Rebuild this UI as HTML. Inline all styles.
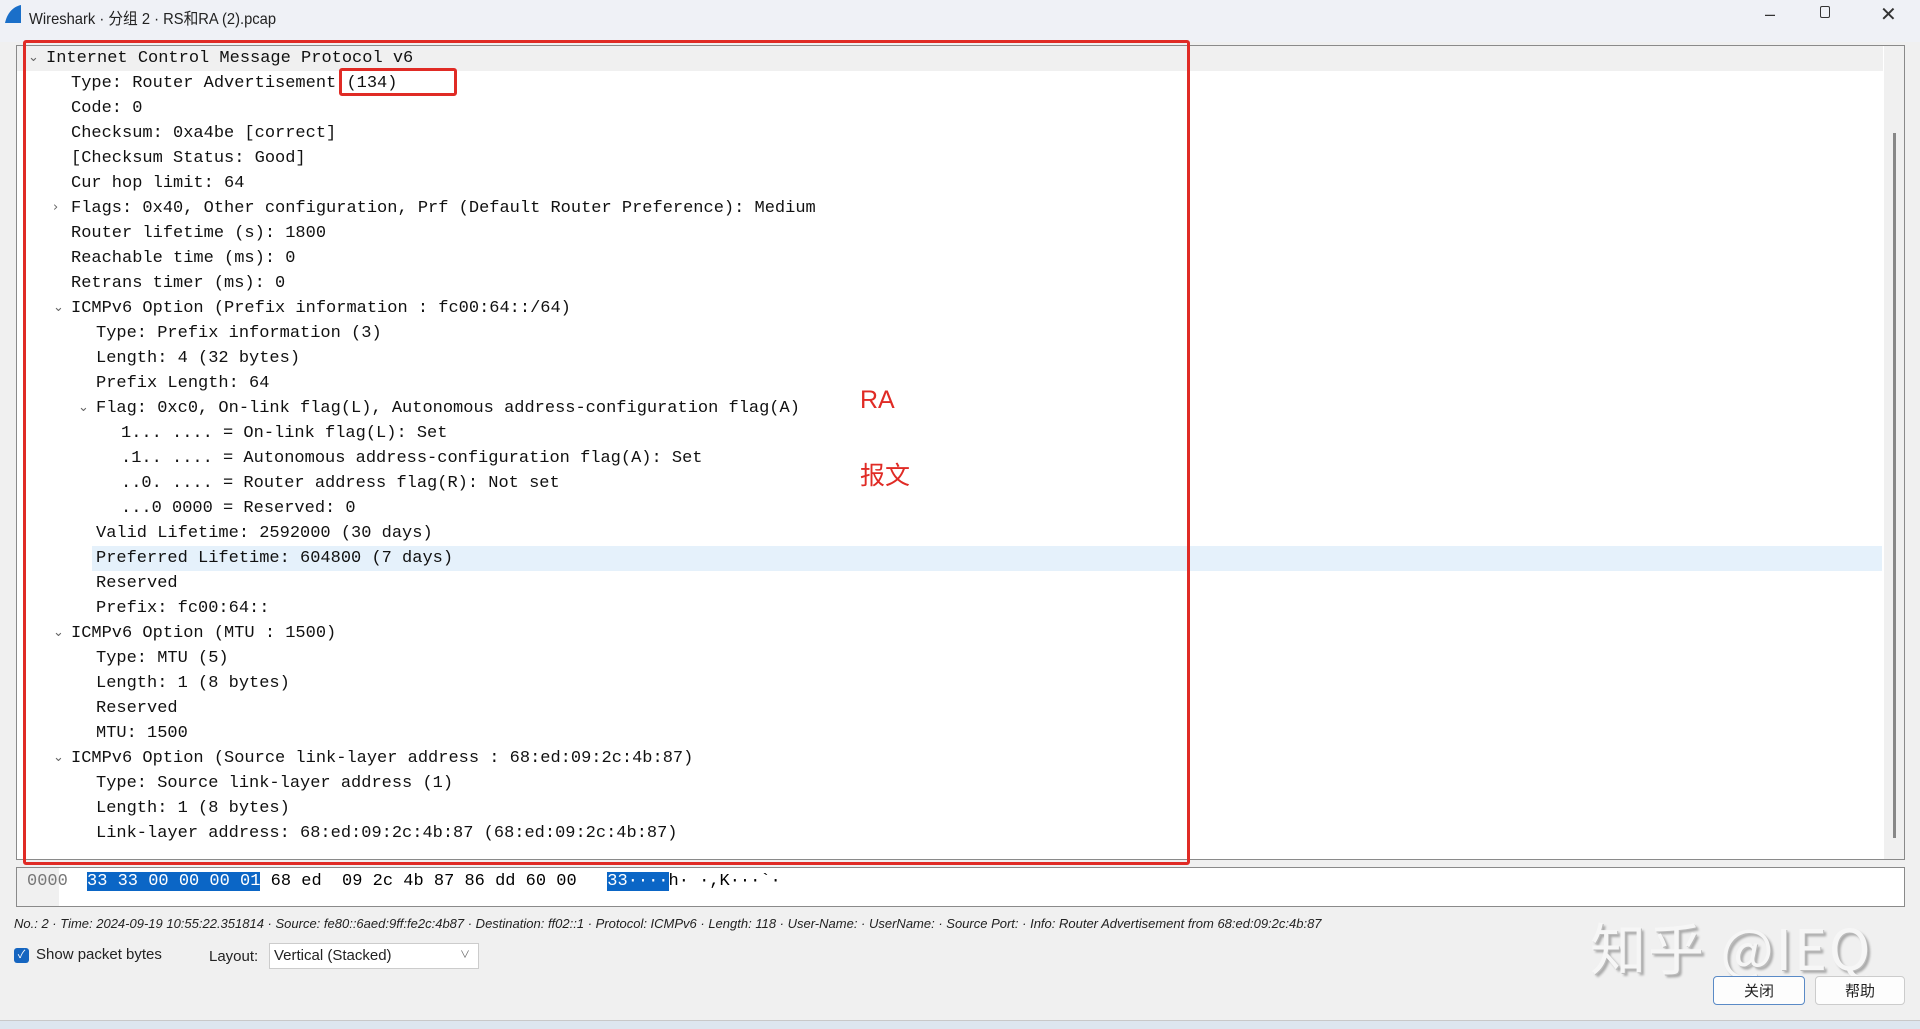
<!DOCTYPE html>
<html><head><meta charset="utf-8"><style>
*{margin:0;padding:0;box-sizing:border-box}
body{width:1920px;height:1029px;background:#f0f0f0;position:relative;overflow:hidden;font-family:"Liberation Sans","Noto Sans CJK SC",sans-serif}
.title{position:absolute;left:0;top:0;width:1920px;height:42px;background:#eff1f6}
.title .t{position:absolute;left:29px;top:5px;font-size:16px;color:#222;transform:scaleX(.92);transform-origin:left}
.tree{position:absolute;left:16px;top:45px;width:1889px;height:815px;background:#fff;border:1px solid #8a8a8a}
.row{position:absolute;left:0;height:25px;line-height:25px;font-family:"Liberation Mono",monospace;font-size:17px;color:#111;white-space:pre;width:1866px}
.arr{position:absolute;font-size:13px;color:#666;font-family:"DejaVu Sans",sans-serif}
.sb{position:absolute;left:1867px;top:0;width:20px;height:813px;background:#f0f0f0}
.thumb{position:absolute;left:9px;top:87px;width:3px;height:705px;background:#888}
.hex{position:absolute;left:16px;top:867px;width:1889px;height:40px;background:#fff;border:1px solid #8a8a8a;font-family:"Liberation Mono",monospace;font-size:17px;white-space:pre}
.red{position:absolute;border:3px solid #e02b25;border-radius:3px}
.btn{position:absolute;top:976px;height:29px;background:#fdfdfd;border:1px solid #ccc;border-radius:4px;font-size:15px;text-align:center;line-height:27px;font-family:"Noto Sans CJK SC",sans-serif;color:#222}
</style></head><body>
<div class="title">
<svg style="position:absolute;left:3px;top:4px" width="20" height="20" viewBox="0 0 20 20"><path d="M2 19 C4 10 9 3 18 1 L18 19 Z" fill="#1a6fc9"/></svg>
<div class="t">Wireshark · 分组 2 · RS和RA (2).pcap</div>
<div style="position:absolute;left:1765px;top:4px;font-size:18px;color:#333">–</div>
<div style="position:absolute;left:1820px;top:6px;width:10px;height:12px;border:1.5px solid #333;border-radius:2px"></div>
<div style="position:absolute;left:1880px;top:2px;font-size:20px;color:#333">✕</div>
</div>

<div class="tree">
<div class="row" style="top:0;background:#f0f0f0;width:1866px"></div>
<div class="row" style="top:500px;left:75px;width:1790px;background:#e5f1fb"></div>
<div id="rows"></div>
<div class="sb"><div class="thumb"></div></div>
</div>

<div class="hex">
<div style="position:absolute;left:0;top:0;width:42px;height:38px;background:#f0f0f0"></div>
<div style="position:absolute;left:10px;top:4px;color:#777">0000</div>
<div style="position:absolute;left:70px;top:4px"><span style="background:#0b66c6;color:#fff">33 33 00 00 00 01</span> 68 ed  09 2c 4b 87 86 dd 60 00   <span style="background:#0b66c6;color:#fff">33····</span>h· ·,K···`·</div>
</div>

<div class="red" style="left:23px;top:40px;width:1167px;height:825px"></div>
<div class="red" style="left:339px;top:68px;width:118px;height:28px"></div>
<div style="position:absolute;left:860px;top:386px;color:#e02b25;font-size:25px">RA</div>
<div style="position:absolute;left:860px;top:456px;color:#e02b25;font-size:25px;font-family:'Noto Sans CJK SC',sans-serif">报文</div>

<div style="position:absolute;left:14px;top:916px;font-size:13px;font-style:italic;color:#222;white-space:nowrap;transform:scaleX(1.0);transform-origin:left">No.: 2 · Time: 2024-09-19 10:55:22.351814 · Source: fe80::6aed:9ff:fe2c:4b87 · Destination: ff02::1 · Protocol: ICMPv6 · Length: 118 · User-Name: · UserName: · Source Port: · Info: Router Advertisement from 68:ed:09:2c:4b:87</div>
<div style="position:absolute;left:14px;top:948px;width:15px;height:15px;background:#1565c0;border-radius:3px;color:#fff;font-size:11px;text-align:center;line-height:15px">✓</div>
<div style="position:absolute;left:36px;top:946px;font-size:15px;color:#222">Show packet bytes</div>
<div style="position:absolute;left:209px;top:948px;font-size:15px;color:#222">Layout:</div>
<div style="position:absolute;left:269px;top:943px;width:210px;height:26px;background:#fff;border:1px solid #ccc;font-size:15px;line-height:24px;padding-left:4px;color:#222">Vertical (Stacked)<span style="position:absolute;right:8px;font-size:10px;color:#666">∨</span></div>
<div style="position:absolute;left:1590px;top:906px;font-size:56px;color:#f6f6f6;text-shadow:1px 1px 0 #bbb,3px 3px 2px #aaa;font-family:'Noto Sans CJK SC',sans-serif;letter-spacing:2px">知乎 @IEQ</div>
<div class="btn" style="left:1713px;width:92px;border-color:#5a8ac6">关闭</div>
<div class="btn" style="left:1815px;width:90px">帮助</div>
<div style="position:absolute;left:0;top:1020px;width:1920px;height:9px;background:#dde6ef;border-top:1px solid #c8c8c8"></div>

<script>
var R=[
[0,"Internet Control Message Protocol v6","v"],
[1,"Type: Router Advertisement (134)"],
[1,"Code: 0"],
[1,"Checksum: 0xa4be [correct]"],
[1,"[Checksum Status: Good]"],
[1,"Cur hop limit: 64"],
[1,"Flags: 0x40, Other configuration, Prf (Default Router Preference): Medium",">"],
[1,"Router lifetime (s): 1800"],
[1,"Reachable time (ms): 0"],
[1,"Retrans timer (ms): 0"],
[1,"ICMPv6 Option (Prefix information : fc00:64::/64)","v"],
[2,"Type: Prefix information (3)"],
[2,"Length: 4 (32 bytes)"],
[2,"Prefix Length: 64"],
[2,"Flag: 0xc0, On-link flag(L), Autonomous address-configuration flag(A)","v"],
[3,"1... .... = On-link flag(L): Set"],
[3,".1.. .... = Autonomous address-configuration flag(A): Set"],
[3,"..0. .... = Router address flag(R): Not set"],
[3,"...0 0000 = Reserved: 0"],
[2,"Valid Lifetime: 2592000 (30 days)"],
[2,"Preferred Lifetime: 604800 (7 days)"],
[2,"Reserved"],
[2,"Prefix: fc00:64::"],
[1,"ICMPv6 Option (MTU : 1500)","v"],
[2,"Type: MTU (5)"],
[2,"Length: 1 (8 bytes)"],
[2,"Reserved"],
[2,"MTU: 1500"],
[1,"ICMPv6 Option (Source link-layer address : 68:ed:09:2c:4b:87)","v"],
[2,"Type: Source link-layer address (1)"],
[2,"Length: 1 (8 bytes)"],
[2,"Link-layer address: 68:ed:09:2c:4b:87 (68:ed:09:2c:4b:87)"]];
var h="";
R.forEach(function(r,i){var x=29+25*r[0];var y=i*25;
h+='<div class="row" style="top:'+y+'px;left:'+x+'px;width:auto">'+r[1].replace(/&/g,"&amp;")+'</div>';
if(r[2])h+='<div class="arr" style="left:'+(x-18)+'px;top:'+(y+4)+'px">'+(r[2]=="v"?"⌄":"›")+'</div>';});
document.getElementById("rows").innerHTML=h;
</script>
</body></html>
